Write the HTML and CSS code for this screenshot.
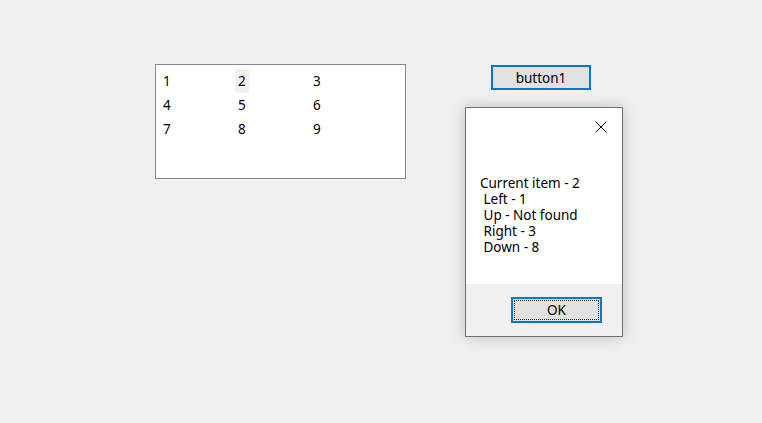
FILE: index.html
```html
<!DOCTYPE html>
<html>
<head>
<meta charset="utf-8">
<link rel="stylesheet" href="styles.css">
</head>
<body>
<div class="form">
  <div class="listbox">
    <div class="row"><span class="cell"><span class="item">1</span></span><span class="cell"><span class="item focused">2</span></span><span class="cell"><span class="item">3</span></span></div>
    <div class="row"><span class="cell"><span class="item">4</span></span><span class="cell"><span class="item">5</span></span><span class="cell"><span class="item">6</span></span></div>
    <div class="row"><span class="cell"><span class="item">7</span></span><span class="cell"><span class="item">8</span></span><span class="cell"><span class="item">9</span></span></div>
  </div>
  <button class="btn button1">button1</button>
</div>
<div class="dialog">
  <div class="dialog-header">
    <svg class="close" width="12" height="12" viewBox="0 0 12 12"><path d="M0.5 0.5 L11.5 11.5 M11.5 0.5 L0.5 11.5" stroke="#000" stroke-width="1" fill="none"/></svg>
  </div>
  <div class="dialog-body">Current item - 2
 Left - 1
 Up - Not found
 Right - 3
 Down - 8</div>
  <div class="dialog-footer">
    <button class="btn ok">OK</button>
  </div>
</div>
</body>
</html>
```
FILE: styles.css
```css
html, body {
  margin: 0;
  padding: 0;
  background: #f0f0f0;
  width: 762px;
  height: 423px;
  overflow: hidden;
  font-family: "Noto Sans", "Open Sans", sans-serif;
  font-size: 13.5px;
  color: #000;
}
.form {
  display: flex;
  align-items: flex-start;
  padding: 64px 0 0 155px;
}
.listbox {
  box-sizing: border-box;
  width: 251px;
  height: 115px;
  background: #fff;
  border: 1px solid #828790;
  padding: 4px 0 0 4px;
}
.row {
  display: flex;
  height: 24px;
}
.cell {
  width: 75px;
  display: flex;
  align-items: stretch;
}
.item {
  padding: 0 3px;
  line-height: 24px;
}
.item.focused {
  background: #f0f0f0;
}
.btn {
  font-family: "Noto Sans", "Open Sans", sans-serif;
  font-size: 13.5px;
  color: #000;
  background: #e1e1e1;
  border: 2px solid #0078d7;
  box-sizing: border-box;
  padding: 0;
  margin: 0;
}
.button1 {
  width: 100px;
  height: 25px;
  margin-left: 85px;
  margin-top: 1px;
}
.dialog {
  position: absolute;
  left: 465px;
  top: 107px;
  width: 158px;
  height: 230px;
  box-sizing: border-box;
  border: 1px solid #707070;
  background: #fff;
  display: flex;
  flex-direction: column;
  box-shadow: 0 0 14px rgba(0, 0, 0, 0.22);
}
.dialog-header {
  height: 38px;
  display: flex;
  justify-content: flex-end;
  align-items: center;
  padding-right: 15px;
}
.dialog-body {
  flex: 1;
  white-space: pre;
  line-height: 16px;
  padding: 29px 0 0 14px;
}
.dialog-footer {
  height: 52px;
  background: #f0f0f0;
  padding: 13px 0 0 45px;
  box-sizing: border-box;
}
.ok {
  position: relative;
  width: 91px;
  height: 26px;
}
.ok::after {
  content: "";
  position: absolute;
  inset: 1px;
  border: 1px dotted #222;
}
```
